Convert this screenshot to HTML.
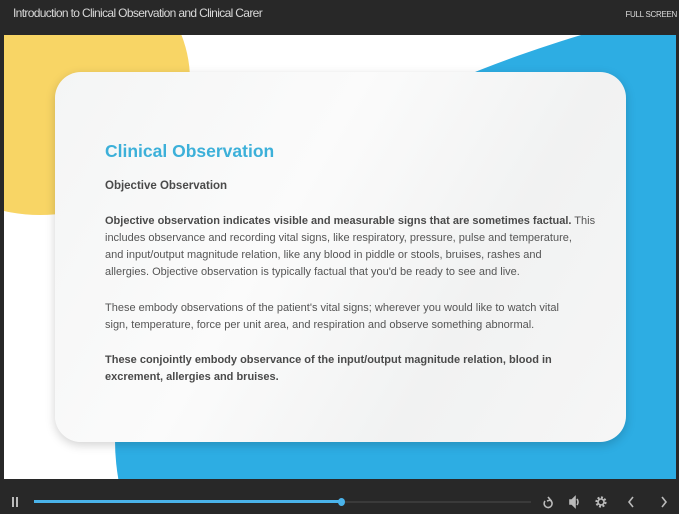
<!DOCTYPE html>
<html><head><style>
html,body{margin:0;padding:0;width:679px;height:514px;background:#282828;overflow:hidden;font-family:"Liberation Sans",sans-serif;position:relative}
.top{position:absolute;left:13px;top:6px;color:#d8d8d8;font-size:12px;letter-spacing:-0.65px}
.fs{position:absolute;right:2px;top:10px;color:#ddd;font-size:8px;letter-spacing:-0.3px}
.slide{position:absolute;left:4px;top:35px;width:672px;height:444px;background:#fff;overflow:hidden}
.yel{position:absolute;left:-114px;top:-90px;width:300px;height:270px;border-radius:50%;background:#f8d565}
.blue{position:absolute;left:111px;top:-74px;width:2000px;height:958px;border-radius:50%;background:#2dade3}
.card{position:absolute;left:51px;top:37px;width:571px;height:370px;border-radius:26px;background:linear-gradient(120deg,#f4f5f5,#fbfbfb 40%,#f1f2f2 70%,#f6f6f6);box-shadow:0 3px 10px rgba(0,0,0,.18)}
.t{position:absolute;left:101px;color:#3cb0d9;font-weight:bold;font-size:17.5px;top:106px}
.c{position:absolute;left:101px;color:#555;font-size:11px;line-height:17px;white-space:nowrap}
b{color:#4a4a4a}
</style></head><body>
<div class="top">Introduction to Clinical Observation and Clinical Carer</div>
<div class="fs">FULL SCREEN</div>
<div class="slide">
<div class="yel"></div>
<div class="blue"></div>
<div class="card"></div>
<div class="t">Clinical Observation</div>
<div class="c" style="top:143px;font-weight:bold;color:#4a4a4a;font-size:11.5px">Objective Observation</div>
<div class="c" style="top:178px"><b>Objective observation indicates visible and measurable signs that are sometimes factual.</b> This<br>includes observance and recording vital signs, like respiratory, pressure, pulse and temperature,<br>and input/output magnitude relation, like any blood in piddle or stools, bruises, rashes and<br>allergies. Objective observation is typically factual that you'd be ready to see and live.</div>
<div class="c" style="top:265px">These embody observations of the patient's vital signs; wherever you would like to watch vital<br>sign, temperature, force per unit area, and respiration and observe something abnormal.</div>
<div class="c" style="top:317px"><b>These conjointly embody observance of the input/output magnitude relation, blood in<br>excrement, allergies and bruises.</b></div>
</div>
<div style="position:absolute;left:12px;top:497px;width:2px;height:10px;background:#bbb"></div>
<div style="position:absolute;left:16px;top:497px;width:2px;height:10px;background:#bbb"></div>
<div style="position:absolute;left:34px;top:501px;width:497px;height:2px;background:#3a3a3a"></div>
<div style="position:absolute;left:34px;top:500px;width:308px;height:3px;background:#4ab3ea"></div>
<div style="position:absolute;left:338px;top:498px;width:7px;height:8px;border-radius:50%;background:#4ab3ea"></div>
<svg style="position:absolute;left:540px;top:494px" width="135" height="16" viewBox="0 0 135 16" fill="none" stroke="#bbb" stroke-width="1.6">
<path d="M10 6 A4 4 0 1 1 5 7"/><path d="M8 3 L10.5 6 L7 7" />
<path d="M30 6 h2 l3-3 v10 l-3-3 h-2z" fill="#bbb"/><path d="M37 5 q2 3 0 6"/>
<circle cx="61" cy="8" r="3"/><circle cx="61" cy="8" r="4.5" stroke-dasharray="2 1.5" stroke-width="2.2"/>
<path d="M93 3 l-4 5 l4 5"/><path d="M122 3 l4 5 l-4 5"/>
</svg>
</body></html>
